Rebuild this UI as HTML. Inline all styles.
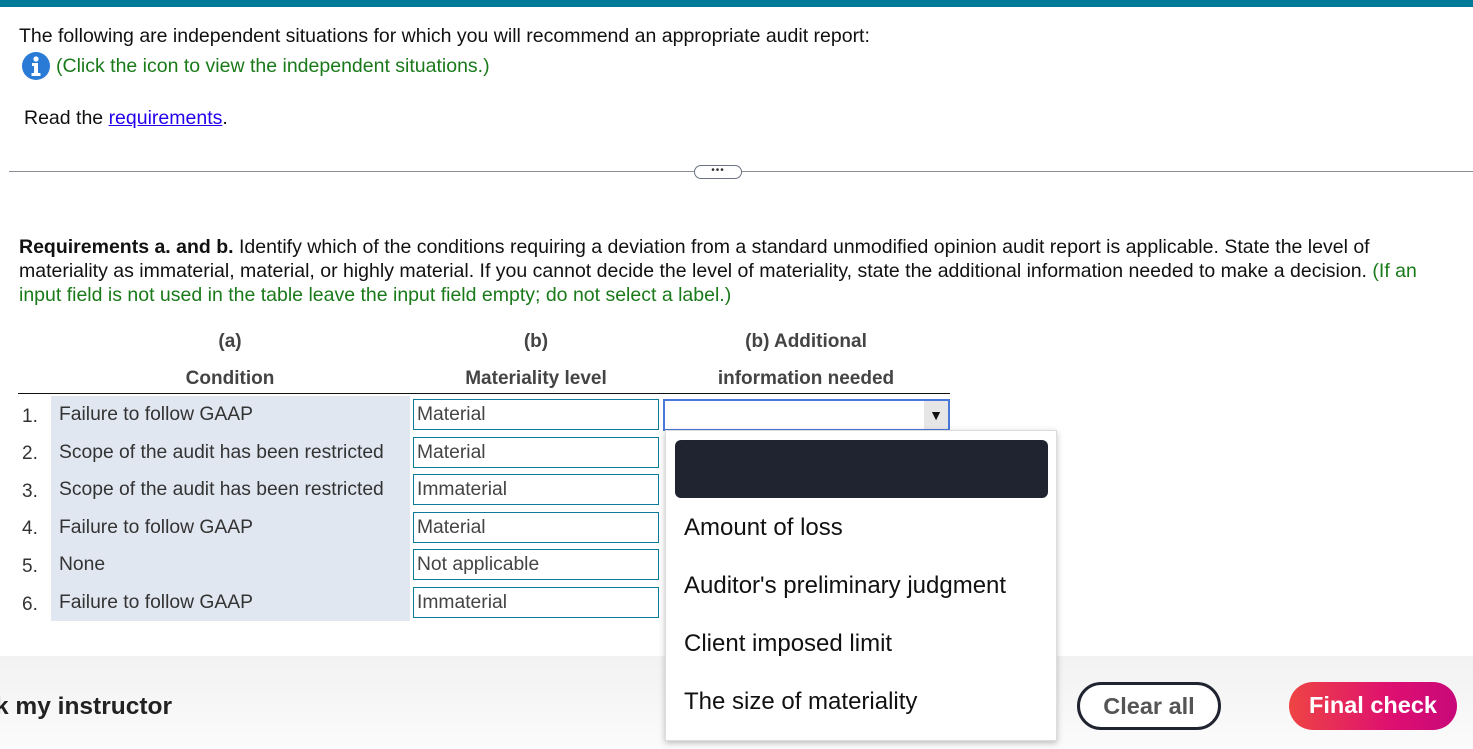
<!DOCTYPE html>
<html><head><meta charset="utf-8"><style>
*{box-sizing:border-box;margin:0;padding:0}
body{width:1473px;height:749px;position:relative;overflow:hidden;background:#fff;font-family:"Liberation Sans",Arial,sans-serif;font-size:19.5px;color:#111}
.a{position:absolute;white-space:nowrap}
.g{color:#1a7a1a}
.hd{font-weight:bold;color:#444;text-align:center;font-size:19px}
.cell{position:absolute;left:51px;width:359px;height:37px;background:#e1e7f1;color:#333;padding-left:8px;line-height:38px;font-size:19.3px}
.num{position:absolute;left:22px;color:#333;line-height:40px;font-size:19px}
.inp{position:absolute;left:413px;width:246px;height:31px;border:1px solid #0e7c99;color:#444;padding-left:3px;line-height:30px;background:#fff;font-size:19.3px}
.opt{position:absolute;left:684px;font-size:24px;color:#111}
</style></head><body>
<div class="a" style="left:0;top:0;width:1473px;height:7px;background:#007a99"></div>
<div class="a" style="left:19px;top:25px">The following are independent situations for which you will recommend an appropriate audit report:</div>
<svg class="a" style="left:21px;top:51px" width="30" height="30" viewBox="0 0 30 30"><circle cx="15" cy="15" r="14" fill="#2a7bd6"/><circle cx="15" cy="8" r="2.6" fill="#fff"/><path d="M11 12h6v10h2.5v3h-9v-3H13v-7h-2z" fill="#fff"/></svg>
<div class="a g" style="left:56px;top:55px">(Click the icon to view the independent situations.)</div>
<div class="a" style="left:24px;top:107px">Read the <span style="color:#2200ee;text-decoration:underline">requirements</span>.</div>
<div class="a" style="left:9px;top:171px;width:1464px;height:1px;background:#8a8f96"></div>
<div class="a" style="left:694px;top:165px;width:48px;height:14px;border:1px solid #6b7280;border-radius:7px;background:#fff;font-size:10px;line-height:9px;text-align:center;color:#333;letter-spacing:1px">&bull;&bull;&bull;</div>
<div class="a" style="left:19px;top:235px;line-height:24px;white-space:normal;width:1420px"><b>Requirements a. and b.</b> Identify which of the conditions requiring a deviation from a standard unmodified opinion audit report is applicable. State the level of materiality as immaterial, material, or highly material. If you cannot decide the level of materiality, state the additional information needed to make a decision. <span class="g">(If an input field is not used in the table leave the input field empty; do not select a label.)</span></div>
<div class="a hd" style="left:130px;top:331px;width:200px">(a)</div>
<div class="a hd" style="left:130px;top:368px;width:200px">Condition</div>
<div class="a hd" style="left:436px;top:331px;width:200px">(b)</div>
<div class="a hd" style="left:436px;top:368px;width:200px">Materiality level</div>
<div class="a hd" style="left:686px;top:331px;width:240px">(b) Additional</div>
<div class="a hd" style="left:686px;top:368px;width:240px">information needed</div>
<div class="a" style="left:18px;top:393px;width:932px;height:1px;background:#111"></div>
<div class="a" style="left:51px;top:396px;width:359px;height:224px;background:#e1e7f1"></div>
<div class="num" style="top:397px">1.</div><div class="cell" style="top:396px">Failure to follow GAAP</div><div class="inp" style="top:399px">Material</div>
<div class="num" style="top:434px">2.</div><div class="cell" style="top:434px">Scope of the audit has been restricted</div><div class="inp" style="top:437px">Material</div>
<div class="num" style="top:472px">3.</div><div class="cell" style="top:471px">Scope of the audit has been restricted</div><div class="inp" style="top:474px">Immaterial</div>
<div class="num" style="top:509px">4.</div><div class="cell" style="top:509px">Failure to follow GAAP</div><div class="inp" style="top:512px">Material</div>
<div class="num" style="top:547px">5.</div><div class="cell" style="top:546px">None</div><div class="inp" style="top:549px">Not applicable</div>
<div class="num" style="top:585px">6.</div><div class="cell" style="top:584px">Failure to follow GAAP</div><div class="inp" style="top:587px">Immaterial</div>
<div class="a" style="left:663px;top:399px;width:287px;height:32px;border:2px solid #4a78d8;background:#fff"></div>
<div class="a" style="left:924px;top:401px;width:24px;height:28px;background:#e6e6e6;font-size:14px;text-align:center;line-height:28px;color:#111">&#9660;</div>
<div class="a" style="left:0;top:656px;width:1473px;height:93px;background:linear-gradient(#f2f2f2,#fbfbfb)"></div>
<div class="a" style="left:-5px;top:693px;font-size:24.5px;font-weight:bold;color:#222">k my instructor</div>
<div class="a" style="left:1077px;top:682px;width:144px;height:48px;border:3px solid #1f2430;border-radius:24px;background:#fff;font-size:23.5px;font-weight:bold;color:#555;text-align:center;line-height:42px">Clear all</div>
<div class="a" style="left:1289px;top:682px;width:168px;height:48px;border-radius:24px;background:linear-gradient(90deg,#ee4444,#de1070 60%,#c8087a);font-size:23.5px;font-weight:bold;color:#fff;text-align:center;line-height:46px">Final check</div>
<div class="a" style="left:665px;top:430px;width:392px;height:311px;background:#fff;border:1px solid #ddd;box-shadow:0 2px 6px rgba(0,0,0,.25)"></div>
<div class="a" style="left:675px;top:440px;width:373px;height:58px;background:#1f2430;border-radius:6px"></div>
<div class="opt" style="top:514px">Amount of loss</div>
<div class="opt" style="top:572px">Auditor's preliminary judgment</div>
<div class="opt" style="top:630px">Client imposed limit</div>
<div class="opt" style="top:688px">The size of materiality</div>
</body></html>
